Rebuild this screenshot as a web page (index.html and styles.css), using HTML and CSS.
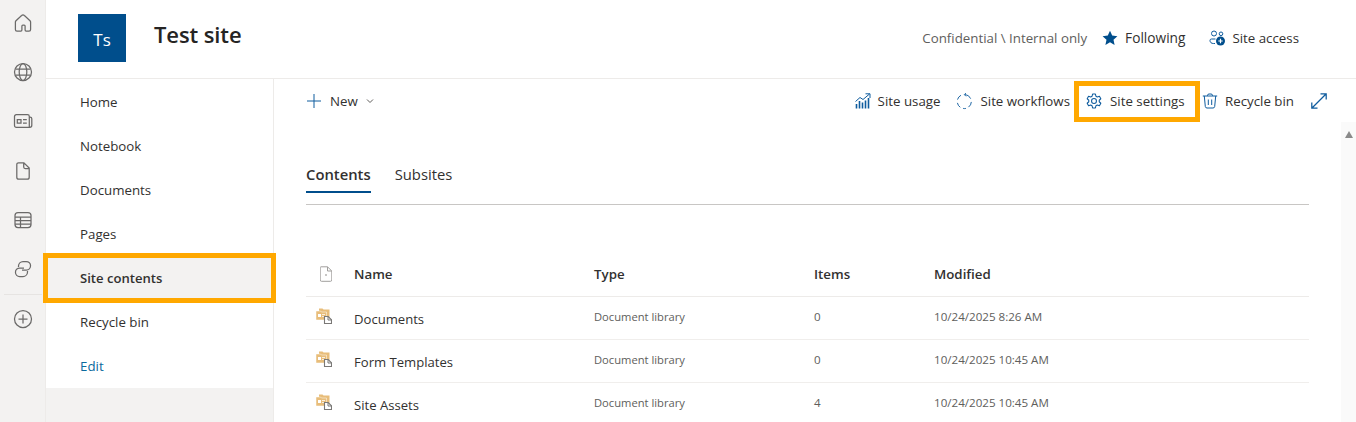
FILE: index.html
```html
<!DOCTYPE html>
<html lang="en">
<head>
<meta charset="utf-8">
<title>Site contents</title>
<link rel="stylesheet" href="styles.css">
</head>
<body>
<aside class="rail">
  <svg class="rail-icon" viewBox="0 0 20 20"><path d="M8.600 2.500a2 2 0 0 1 2.800 0l5.600 5.200a2 2 0 0 1 .6 1.400V16.500a1.600 1.600 0 0 1-1.600 1.600h-2.900a1 1 0 0 1-1-1v-4a1 1 0 0 0-1-1H9.900a1 1 0 0 0-1 1v4a1 1 0 0 1-1 1H4A1.600 1.600 0 0 1 2.400 16.500V9.100a2 2 0 0 1 .6-1.400z"/></svg>
  <svg class="rail-icon" viewBox="0 0 20 20"><circle cx="10" cy="10" r="8.500"/><ellipse cx="10" cy="10" rx="3.800" ry="8.500"/><path d="M2.500 7h15M2.500 13h15"/></svg>
  <svg class="rail-icon" viewBox="0 0 20 20"><path d="M1.500 5.500A1.800 1.800 0 0 1 3.300 3.700h11.200a1.800 1.800 0 0 1 1.800 1.800V16.300H3.300a1.800 1.800 0 0 1-1.800-1.800zM16.300 6h.7a1.800 1.800 0 0 1 1.800 1.800v6.500a2 2 0 0 1-2 2h-1"/><path d="M4.300 8.500h3.700v3.500H4.300zM10 8.500h3.800M10 12h3.800"/></svg>
  <svg class="rail-icon" viewBox="0 0 20 20"><path d="M5.500 1.800h5.400l5.300 5.300V16.200a2 2 0 0 1-2 2H5.800a2 2 0 0 1-2-2V3.500a1.700 1.700 0 0 1 1.700-1.700zM10.700 2v4a1.500 1.500 0 0 0 1.500 1.500h3.900"/></svg>
  <svg class="rail-icon" viewBox="0 0 20 20"><rect x="2" y="2.500" width="16" height="15" rx="3"/><path d="M2 7h16M2 10.500h16M2 14h16M7.500 7v10.500"/></svg>
  <svg class="rail-icon" viewBox="0 0 20 20"><path d="M5.500 8V7a4.500 4.500 0 0 1 4.500-4.500h3.300a4.250 4.250 0 0 1 0 8.500H9"/><path d="M14.500 12v1a4.500 4.500 0 0 1-4.500 4.500H6.700a4.250 4.250 0 0 1 0-8.500H11"/></svg>
  <div class="rail-sep"></div>
  <svg class="rail-icon rail-add" viewBox="0 0 20 20"><circle cx="10" cy="10" r="8.500"/><path d="M10 5.500v9M5.500 10h9"/></svg>
</aside>

<div class="page">
  <header class="site-head">
    <div class="logo">Ts</div>
    <div class="site-title">Test site</div>
    <div class="head-actions">
      <span class="label">Confidential \ Internal only</span>
      <span class="act act-follow">
        <svg class="ico-16" viewBox="0 0 16 16"><path class="solid" d="M8 .8l2.200 4.800 5.200.6-3.900 3.500 1.100 5.200L8 12.300l-4.600 2.600 1.100-5.200L.6 6.200l5.200-.6z"/></svg>
        Following
      </span>
      <span class="act act-access">
        <svg class="ico-16" viewBox="0 0 16 16"><circle class="line" cx="5" cy="3.500" r="2.500"/><circle class="line" cx="12" cy="3.800" r="1.800"/><path class="line" d="M6.500 9H2.500A1.500 1.500 0 0 0 1 10.500c0 2 1.500 3 3.500 3h1.500"/><circle class="solid" cx="11.500" cy="11" r="4.500"/><path class="knock" d="M11.500 8.800v4.400M9.300 11h4.400"/></svg>
        Site access
      </span>
    </div>
  </header>

  <div class="columns">
    <nav class="side-nav">
      <div class="nav-list">
        <a class="nav-item">Home</a>
        <a class="nav-item">Notebook</a>
        <a class="nav-item">Documents</a>
        <a class="nav-item">Pages</a>
        <a class="nav-item is-current">Site contents</a>
        <a class="nav-item">Recycle bin</a>
        <a class="nav-item is-edit">Edit</a>
      </div>
    </nav>

    <main class="main">
      <div class="cmdbar">
        <button class="cmd cmd-new">
          <svg class="ico-16" viewBox="0 0 16 16"><path class="line" d="M8 1v14M1 8h14"/></svg>
          New
          <svg class="chev" viewBox="0 0 8 8"><path d="M1 2.500l3 3 3-3"/></svg>
        </button>
        <div class="cmd-right">
          <button class="cmd cmd-usage">
            <svg class="ico-16" viewBox="0 0 16 16"><path class="line" d="M.5 8.500l4.500-4 3 2L14.500 1M10.500 .8h4.500v4.200"/><path class="bars" d="M1.500 11v4.500M4.500 8v7.500M7.500 9.500v6M10.500 7.500v8M13.500 5v10.500"/></svg>
            Site usage
          </button>
          <button class="cmd cmd-flow">
            <svg class="ico-16" viewBox="-.8 -1 17 17"><path class="line" d="M4.500 1.400A7.500 7.500 0 0 0 .8 6M.7 9.500a7.500 7.500 0 0 0 3 4.700M6.800 15.400a7.500 7.500 0 0 0 2.900 0M12.500 14a7.500 7.500 0 0 0 3-5.500M14.800 5a7.500 7.500 0 0 0-6-4.400M9.800 -.8L8 .7l1.800 1.800"/></svg>
            Site workflows
          </button>
          <button class="cmd cmd-settings">
            <svg class="ico-16" viewBox="0.800 0 14.400 15"><path class="line" d="M6.700 1h2.600l.5 2 1.300.7 2-.6 1.300 2.300-1.500 1.400v1.400l1.500 1.400-1.300 2.300-2-.6-1.300.7-.5 2H6.700l-.5-2-1.300-.7-2 .6-1.300-2.300 1.500-1.400V6.800L1.600 5.400l1.300-2.300 2 .6 1.300-.7z" stroke-linejoin="round"/><circle class="line" cx="8" cy="7.500" r="2.300"/></svg>
            Site settings
          </button>
          <button class="cmd cmd-bin">
            <svg class="ico-16" viewBox="0 0 16 16"><path class="line" d="M.8 3h14.400M5.500 3V2.500A1.500 1.500 0 0 1 7 1h2a1.500 1.500 0 0 1 1.500 1.500V3M2.300 3l1 10.500A1.700 1.700 0 0 0 5 15h6a1.700 1.700 0 0 0 1.700-1.500l1-10.500M6.300 6.500v5.500M9.700 6.500v5.500"/></svg>
            Recycle bin
          </button>
          <button class="cmd cmd-expand">
            <svg class="ico-16" viewBox="0 0 16 16"><path class="line line-strong" d="M1 15L15 1M9.500.8h5.700v5.700M.8 9.500v5.700h5.700"/></svg>
          </button>
        </div>
      </div>

      <div class="scroll-area">
        <div class="content">
          <div class="tabs">
            <span class="tab is-active">Contents</span>
            <span class="tab">Subsites</span>
          </div>
          <div class="table">
            <div class="row row-head">
              <span class="c-icon c-icon-file">
                <svg class="ico-file" viewBox="1 0 12 16"><path d="M2 .8h6.500L12.800 5v9a1.300 1.300 0 0 1-1.300 1.300h-9A1.300 1.300 0 0 1 1.200 14V1.600A.8.8 0 0 1 2 .8zM8.500 1v4h4.200"/><circle cx="7" cy="9" r=".5"/></svg>
              </span>
              <span class="c-name">Name</span><span class="c-type">Type</span><span class="c-items">Items</span><span class="c-mod">Modified</span>
            </div>
            <div class="row">
              <span class="c-icon"><svg class="ico-lib" viewBox="0 0 16 16"><use href="#lib"/></svg></span>
              <span class="c-name">Documents</span><span class="c-type">Document library</span><span class="c-items">0</span><span class="c-mod">10/24/2025 8:26 AM</span>
            </div>
            <div class="row">
              <span class="c-icon"><svg class="ico-lib" viewBox="0 0 16 16"><use href="#lib"/></svg></span>
              <span class="c-name">Form Templates</span><span class="c-type">Document library</span><span class="c-items">0</span><span class="c-mod">10/24/2025 10:45 AM</span>
            </div>
            <div class="row">
              <span class="c-icon"><svg class="ico-lib" viewBox="0 0 16 16"><use href="#lib"/></svg></span>
              <span class="c-name">Site Assets</span><span class="c-type">Document library</span><span class="c-items">4</span><span class="c-mod">10/24/2025 10:45 AM</span>
            </div>
          </div>
        </div>
        <div class="scroll-track"><div class="scroll-up"></div></div>
      </div>
    </main>
  </div>
</div>

<svg class="defs" width="0" height="0">
  <defs>
    <g id="lib">
      <path fill="#e8bd7a" d="M3 .5h3.500l1 1H13.500v8H3z"/>
      <path fill="#e8bd7a" d="M0 3h4.500l1 1H10.500v8H0z" stroke="#fff" stroke-width=".5"/>
      <path fill="#fff" d="M2 6h3v3H2zM6 6h3v.8H6zM6 8h3v.8H6z"/>
      <path fill="#fff" stroke="#7a7876" stroke-width="1.100" d="M8.500 8.500h3.700l3.300 3.300v3.700h-7z"/>
      <path fill="none" stroke="#7a7876" stroke-width="1" d="M12 8.500v3.500h3.500"/>
    </g>
  </defs>
</svg>
</body>
</html>
```
FILE: styles.css
```css
* { box-sizing: border-box; }
html, body { height: 100%; margin: 0; overflow: hidden; }
body {
  display: flex;
  font-family: "Open Sans", "Noto Sans", sans-serif;
  font-size: 13.300px;
  color: #323130;
  background: #fff;
}
button { font: inherit; color: inherit; background: none; border: 0; padding: 0; }

.rail {
  width: 46px;
  flex: none;
  background: #f3f2f1;
  border-right: 1px solid #edebe9;
  display: flex;
  flex-direction: column;
  align-items: center;
  padding-top: 13px;
}
.rail-icon {
  width: 20px;
  height: 20px;
  margin-bottom: 29.200px;
  fill: none;
  stroke: #6b6a69;
  stroke-width: 1.250;
}
.rail-sep { width: 38px; height: 1px; background: #e6e4e2; margin: -14px 0 14px; }
.rail-add { margin-bottom: 0; }

.page { flex: 1; display: flex; flex-direction: column; min-width: 0; }

.site-head {
  height: 79px;
  flex: none;
  display: flex;
  align-items: center;
  padding: 0 57px 3px 32px;
  border-bottom: 1px solid #edebe9;
}
.logo {
  width: 48px;
  height: 48px;
  background: #004e8c;
  color: #fff;
  font-size: 17px;
  display: flex;
  align-items: center;
  justify-content: center;
  padding-top: 3px;
}
.site-title {
  margin: -8px 0 0 28px;
  font-size: 22px;
  font-weight: 600;
  letter-spacing: -.1px;
  color: #252423;
}
.head-actions { margin-left: auto; display: flex; align-items: center; }
.label { color: #605e5c; }
.act { display: flex; align-items: center; gap: 7px; }
.act-follow { margin-left: 15px; font-size: 13.700px; }
.act-access { margin-left: 24px; }

.ico-16 { width: 16px; height: 16px; flex: none; overflow: visible; }
.solid { fill: #004e8c; }
.line { fill: none; stroke: #0f5c9e; stroke-width: 1; }
.line-strong { stroke-width: 1.250; }
.bars { fill: none; stroke: #0f5c9e; stroke-width: 1.600; }
.knock { fill: none; stroke: #fff; stroke-width: 1.200; }

.columns { flex: 1; display: flex; min-height: 0; }
.side-nav {
  width: 228px;
  flex: none;
  background: #f3f2f1;
  border-right: 1px solid #edebe9;
}
.nav-list { background: #fff; padding: 1px 0 0; height: 309px; }
.nav-item {
  display: flex;
  align-items: center;
  height: 44px;
  padding-left: 34px;
  color: #323130;
}
.is-current {
  background: #f3f2f1;
  font-size: 13.100px;
  font-weight: 600;
  outline: 5px solid #ffa800;
  outline-offset: -2px;
  position: relative;
  width: 227px;
}
.is-edit { color: #0b6a9e; }

.main { flex: 1; display: flex; flex-direction: column; min-width: 0; }
.cmdbar {
  height: 43px;
  flex: none;
  display: flex;
  align-items: center;
  justify-content: space-between;
  padding: 1px 29px 0 32px;
}
.cmd { display: flex; align-items: center; gap: 8px; height: 31px; white-space: nowrap; }
.chev { width: 8px; height: 8px; fill: none; stroke: #605e5c; stroke-width: 1; }
.cmd-right { display: flex; align-items: center; }
.cmd-usage { gap: 7px; }
.cmd-flow { margin-left: 16px; }
.cmd-settings {
  margin-left: 9px;
  padding: 0 0 0 7px;
  width: 116px;
  outline: 5px solid #ffa800;
}
.cmd-bin { margin-left: 7px; gap: 7px; }
.cmd-expand { margin-left: 17px; }

.scroll-area { flex: 1; display: flex; min-height: 0; }
.content { flex: 1; padding: 33px 32px 0; min-width: 0; }
.scroll-track { width: 15px; flex: none; background: #fafafa; padding-top: 9px; display: flex; justify-content: center; }
.scroll-up {
  width: 0;
  height: 0;
  border: 4.500px solid transparent;
  border-top: 0;
  border-bottom: 7px solid #8a8a8a;
}

.tabs {
  display: flex;
  gap: 24px;
  height: 50px;
  border-bottom: 1px solid #c8c6c4;
  font-size: 14.800px;
}
.tab { height: 38px; display: flex; align-items: center; padding-top: 1px; border-bottom: 2px solid transparent; color: #323130; }
.is-active { font-weight: 600; border-bottom-color: #004e8c; }

.table { margin-top: 47px; }
.row {
  display: grid;
  grid-template-columns: 48px 240px 220px 120px 1fr;
  height: 43px;
  border-bottom: 1px solid #f0eeec;
  align-items: center;
  font-size: 11.200px;
  color: #605e5c;
}
.row-head {
  height: 45px;
  border-bottom-color: #edebe9;
  font-size: 13.300px;
  font-weight: 600;
  color: #323130;
}
.row-head > span { padding-bottom: 1px; }
.row:not(.row-head) > span { padding-bottom: 4px; }
.row:not(.row-head) .c-items,
.row:not(.row-head) .c-mod { font-size: 11.600px; }
.row .c-name { font-size: 13.300px; color: #323130; }
.row:not(.row-head) .c-name { padding: 1px 0 0; font-size: 13.100px; }
.c-icon { display: flex; padding-left: 10px; }
.c-icon-file { padding-left: 14px; }
.ico-file { width: 12px; height: 16px; fill: none; stroke: #a19f9d; stroke-width: 1; }
.ico-lib { width: 16px; height: 16px; }
.defs { position: absolute; }
```
